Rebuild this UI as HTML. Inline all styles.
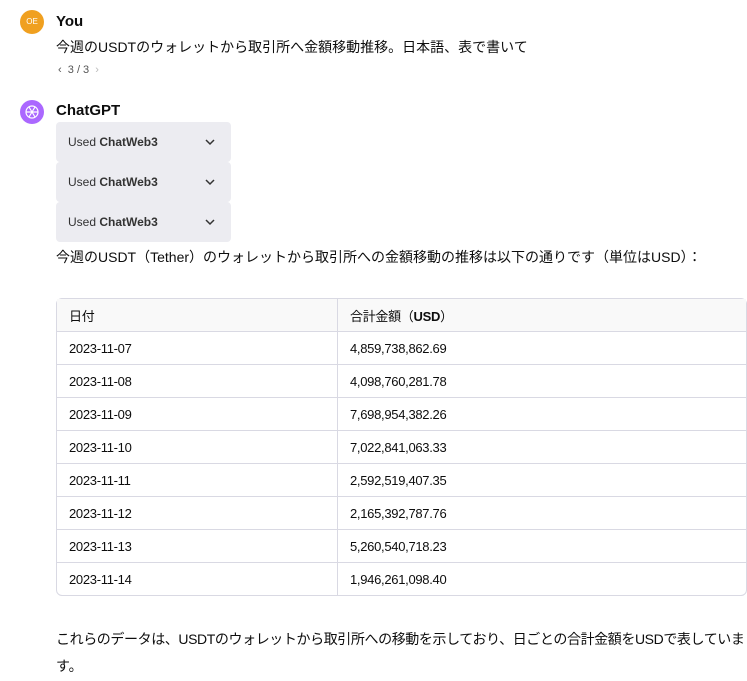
<!DOCTYPE html>
<html><head><meta charset="utf-8"><style>
body{margin:0;width:747px;height:681px;overflow:hidden;background:#fff;font-family:"Liberation Sans","Noto Sans CJK JP",sans-serif;color:#0d0d0d;position:relative}
.a{position:absolute}
.t{font-size:14px;white-space:nowrap}
.box{position:absolute;left:56px;width:175px;height:40px;background:#ececf1;border-radius:4px;font-size:12px;color:#333}
.box span{position:absolute;left:12px;top:13px}
.box svg{position:absolute;left:148px;top:15px}
table{position:absolute;left:56px;top:298px;width:691px;border-collapse:separate;border-spacing:0;border:1px solid #d9d9e3;border-radius:6px;font-size:13px;letter-spacing:-0.3px}
td,th{height:32px;padding:0 12px;text-align:left;font-weight:normal;border-bottom:1px solid #d9d9e3}
th{background:#f9f9f9}
td:first-child,th:first-child{width:256px;border-right:1px solid #d9d9e3}
tr:last-child td{border-bottom:none}
</style></head><body>
<div class="a" style="left:20px;top:10px;width:24px;height:24px;border-radius:50%;background:#f0a020;color:#fff;font-size:8px;text-align:center;line-height:24px">OE</div>
<div class="a t" style="left:56px;top:13px;font-weight:bold;font-size:15px">You</div>
<div class="a t" style="left:56px;top:37px">今週のUSDTのウォレットから取引所へ金額移動推移。日本語、表で書いて</div>
<div class="a" style="left:58px;top:64px;font-size:11px;color:#555">‹ &nbsp;3 / 3 &nbsp;<span style="color:#bbb">›</span></div>
<div class="a" style="left:20px;top:100px;width:24px;height:24px;border-radius:50%;background:#ab68ff"><svg width="24" height="24" viewBox="0 0 24 24" fill="none" stroke="#fff" stroke-width="1.2"><circle cx="12" cy="12" r="6"/><path d="M9 7l6 10M15 7l-6 10M6 12h12"/></svg></div>
<div class="a t" style="left:56px;top:102px;font-weight:bold;font-size:15px">ChatGPT</div>
<div class="box" style="top:122px"><span>Used <b>ChatWeb3</b></span><svg width="12" height="10"><path d="M2 3l4 4 4-4" stroke="#333" stroke-width="1.5" fill="none"/></svg></div>
<div class="box" style="top:162px"><span>Used <b>ChatWeb3</b></span><svg width="12" height="10"><path d="M2 3l4 4 4-4" stroke="#333" stroke-width="1.5" fill="none"/></svg></div>
<div class="box" style="top:202px"><span>Used <b>ChatWeb3</b></span><svg width="12" height="10"><path d="M2 3l4 4 4-4" stroke="#333" stroke-width="1.5" fill="none"/></svg></div>
<div class="a t" style="left:56px;top:247px">今週のUSDT（Tether）のウォレットから取引所への金額移動の推移は以下の通りです（単位はUSD）：</div>
<table>
<tr><th>日付</th><th>合計金額（<b>USD</b>）</th></tr>
<tr><td>2023-11-07</td><td>4,859,738,862.69</td></tr>
<tr><td>2023-11-08</td><td>4,098,760,281.78</td></tr>
<tr><td>2023-11-09</td><td>7,698,954,382.26</td></tr>
<tr><td>2023-11-10</td><td>7,022,841,063.33</td></tr>
<tr><td>2023-11-11</td><td>2,592,519,407.35</td></tr>
<tr><td>2023-11-12</td><td>2,165,392,787.76</td></tr>
<tr><td>2023-11-13</td><td>5,260,540,718.23</td></tr>
<tr><td>2023-11-14</td><td>1,946,261,098.40</td></tr>
</table>
<div class="a t" style="left:56px;top:629px;letter-spacing:-0.4px">これらのデータは、USDTのウォレットから取引所への移動を示しており、日ごとの合計金額をUSDで表していま</div>
<div class="a t" style="left:56px;top:656px">す。</div>
</body></html>
